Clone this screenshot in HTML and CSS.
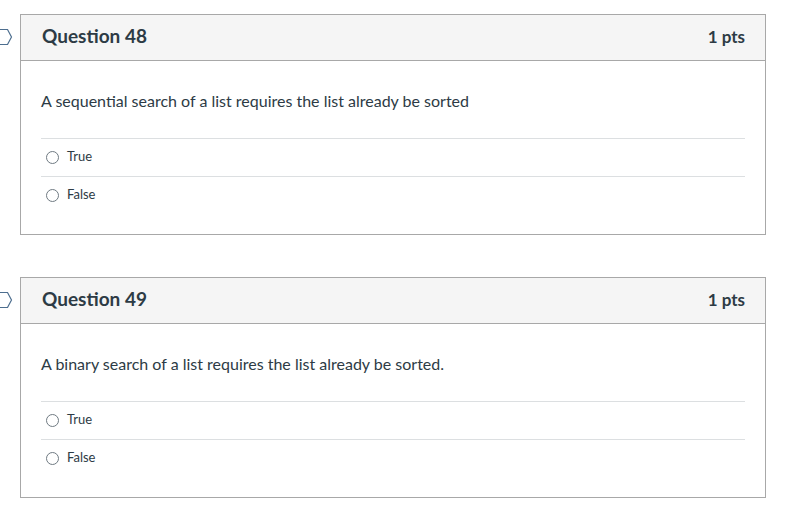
FILE: index.html
```html
<!DOCTYPE html>
<html>
<head>
<meta charset="utf-8">
<link rel="stylesheet" href="styles.css">
</head>
<body>
<div class="quiz">
  <div class="question">
    <svg class="flag" width="14" height="16" viewBox="0 0 14 16"><path d="M-4 0.5 H7.5 L11.5 8 L7.5 15.5 H-4" fill="none" stroke="#4d6e8f" stroke-width="1.2" stroke-linejoin="round"/></svg>
    <div class="header">
      <span class="title">Question 48</span>
      <span class="pts">1 pts</span>
    </div>
    <div class="content">
      <div class="text">A sequential search of a list requires the list already be sorted</div>
      <div class="answers">
        <label class="answer"><span class="radio"></span><span class="label">True</span></label>
        <label class="answer"><span class="radio"></span><span class="label">False</span></label>
      </div>
    </div>
  </div>
  <div class="question">
    <svg class="flag" width="14" height="16" viewBox="0 0 14 16"><path d="M-4 0.5 H7.5 L11.5 8 L7.5 15.5 H-4" fill="none" stroke="#4d6e8f" stroke-width="1.2" stroke-linejoin="round"/></svg>
    <div class="header">
      <span class="title">Question 49</span>
      <span class="pts">1 pts</span>
    </div>
    <div class="content">
      <div class="text">A binary search of a list requires the list already be sorted.</div>
      <div class="answers">
        <label class="answer"><span class="radio"></span><span class="label">True</span></label>
        <label class="answer"><span class="radio"></span><span class="label">False</span></label>
      </div>
    </div>
  </div>
</div>
</body>
</html>
```
FILE: styles.css
```css
html, body {
  margin: 0;
  padding: 0;
  background: #fff;
}
body {
  font-family: Lato, "Open Sans", sans-serif;
  color: #2d3b45;
}
.quiz {
  padding: 14px 0 0 20px;
  display: flex;
  flex-direction: column;
  gap: 42px;
}
.question {
  position: relative;
  width: 746px;
  box-sizing: border-box;
  border: 1px solid #a8a8a8;
}
.flag {
  position: absolute;
  left: -21px;
  top: 14px;
}
.header {
  box-sizing: border-box;
  height: 46px;
  background: #f5f5f5;
  border-bottom: 1px solid #a8a8a8;
  display: flex;
  align-items: center;
  justify-content: space-between;
  padding: 0 20px 4px 21px;
}
.title {
  font-weight: 700;
  font-size: 19px;
}
.pts {
  font-weight: 700;
  font-size: 17px;
  padding-top: 1px;
}
.content {
  padding: 0 20px 20px 20px;
}
.text {
  font-size: 16px;
  line-height: 22px;
  padding: 29px 0 26px;
}
.answers {
  display: flex;
  flex-direction: column;
}
.answer {
  display: flex;
  align-items: center;
  height: 37px;
  border-top: 1px solid #dcdfe1;
  font-size: 13px;
  padding-left: 5px;
  gap: 8px;
}
.radio {
  width: 11px;
  height: 11px;
  border: 1px solid #6f7a82;
  border-radius: 50%;
  box-sizing: content-box;
  margin-top: 0;
}
.label {
  margin-bottom: 4px;
}
```
